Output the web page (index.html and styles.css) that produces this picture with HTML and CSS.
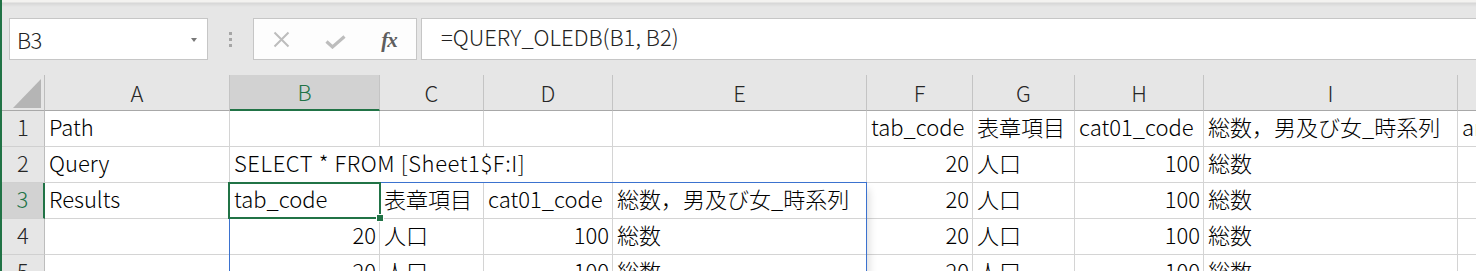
FILE: index.html
```html
<!DOCTYPE html>
<html lang="ja">
<head>
<meta charset="utf-8">
<title>Excel - QUERY_OLEDB</title>
<link rel="stylesheet" href="styles.css">
</head>
<body>
<div class="app">
  <div class="topband"></div>
  <div class="fbar">
    <div class="namebox"><span class="name">B3</span><span class="dd"></span></div>
    <div class="grip"><i></i><i></i><i></i></div>
    <div class="fbtns">
      <span class="slot">
        <svg class="ico-x" width="17" height="17" viewBox="0 0 17 17"><path d="M1.5 1.5 L15.5 15.5 M15.5 1.5 L1.5 15.5" stroke="#bdbdbd" stroke-width="2" fill="none"/></svg>
      </span>
      <span class="slot">
        <svg class="ico-ok" width="21" height="14" viewBox="0 0 21 14"><path d="M1.5 6.5 L7.5 12 L19.5 1.5" stroke="#bdbdbd" stroke-width="3.2" fill="none"/></svg>
      </span>
      <span class="slot"><span class="fx">fx</span></span>
    </div>
    <div class="formula">=QUERY_OLEDB(B1, B2)</div>
  </div>

  <div class="sheetwrap">
    <div class="sheet">
      <div class="corner"><svg width="42" height="35" viewBox="0 0 42 35"><path d="M39 4 L39 33 L11 33 Z" fill="#b5b5b5"/></svg></div>
      <div class="ch">A</div>
      <div class="ch sel">B</div>
      <div class="ch">C</div>
      <div class="ch">D</div>
      <div class="ch">E</div>
      <div class="ch">F</div>
      <div class="ch">G</div>
      <div class="ch">H</div>
      <div class="ch">I</div>
      <div class="ch">J</div>

      <div class="rh">1</div>
      <div class="c">Path</div>
      <div class="c"></div>
      <div class="c"></div>
      <div class="c"></div>
      <div class="c"></div>
      <div class="c">tab_code</div>
      <div class="c">表章項目</div>
      <div class="c">cat01_code</div>
      <div class="c">総数，男及び女_時系列</div>
      <div class="c">area_code</div>

      <div class="rh">2</div>
      <div class="c">Query</div>
      <div class="c span3">SELECT * FROM [Sheet1$F:I]</div>
      <div class="c"></div>
      <div class="c n">20</div>
      <div class="c">人口</div>
      <div class="c n">100</div>
      <div class="c">総数</div>
      <div class="c"></div>

      <div class="rh sel">3</div>
      <div class="c">Results</div>
      <div class="c">tab_code</div>
      <div class="c">表章項目</div>
      <div class="c">cat01_code</div>
      <div class="c">総数，男及び女_時系列</div>
      <div class="c n">20</div>
      <div class="c">人口</div>
      <div class="c n">100</div>
      <div class="c">総数</div>
      <div class="c"></div>

      <div class="rh">4</div>
      <div class="c"></div>
      <div class="c n">20</div>
      <div class="c">人口</div>
      <div class="c n">100</div>
      <div class="c">総数</div>
      <div class="c n">20</div>
      <div class="c">人口</div>
      <div class="c n">100</div>
      <div class="c">総数</div>
      <div class="c"></div>

      <div class="rh">5</div>
      <div class="c"></div>
      <div class="c n">20</div>
      <div class="c">人口</div>
      <div class="c n">100</div>
      <div class="c">総数</div>
      <div class="c n">20</div>
      <div class="c">人口</div>
      <div class="c n">100</div>
      <div class="c">総数</div>
      <div class="c"></div>
    </div>

    <div class="overlay">
      <div class="spill"></div>
      <div class="active"><span class="handle"></span></div>
    </div>
  </div>
</div>
</body>
</html>
```
FILE: styles.css
```css
html, body {
  margin: 0;
  padding: 0;
}
body {
  width: 1476px;
  height: 271px;
  overflow: hidden;
  background: #e6e6e6;
  font-family: "Noto Sans CJK JP", "Noto Sans", sans-serif;
  font-weight: 300;
  color: #000;
}
.app {
  border-left: 2px solid #217346;
  height: 271px;
  box-sizing: border-box;
  overflow: hidden;
}
.topband {
  height: 7px;
  background: linear-gradient(#f3f2f0 0, #f3f2f0 2px, #d6d6d6 3px, #e6e6e6 7px);
}

/* formula bar */
.fbar {
  display: flex;
  height: 42px;
  margin-top: 11px;
  margin-right: -20px;
}
.namebox {
  margin-left: 7px;
  width: 199px;
  box-sizing: border-box;
  border: 1px solid #c6c6c6;
  background: #fff;
  display: flex;
  align-items: center;
  justify-content: space-between;
  padding: 0 10px 0 7px;
}
.name {
  font-size: 22px;
  color: #222;
  padding-bottom: 1px;
  letter-spacing: -0.5px;
}
.dd {
  width: 0;
  height: 0;
  border-left: 3.5px solid transparent;
  border-right: 3.5px solid transparent;
  border-top: 4px solid #787878;
  margin-top: 1px;
}
.grip {
  width: 45px;
  display: flex;
  flex-direction: column;
  align-items: center;
  justify-content: center;
  gap: 3px;
}
.grip i {
  display: block;
  width: 3px;
  height: 3px;
  background: #a6a6a6;
}
.fbtns {
  width: 164px;
  box-sizing: border-box;
  border: 1px solid #c6c6c6;
  background: #fdfdfd;
  display: flex;
}
.slot {
  width: 54px;
  display: flex;
  align-items: center;
  justify-content: center;
}
.ico-ok {
  margin-top: 6px;
}
.fx {
  font-family: "Liberation Serif", "DejaVu Serif", serif;
  font-style: italic;
  font-weight: bold;
  font-size: 21px;
  color: #5e5e5e;
  letter-spacing: -1px;
  margin-top: 2px;
}
.formula {
  flex: 1;
  margin-left: 4px;
  box-sizing: border-box;
  border: 1px solid #c6c6c6;
  background: #fff;
  display: flex;
  align-items: center;
  padding: 0 0 7px 19px;
  font-size: 22px;
  color: #222;
}

/* sheet grid */
.sheetwrap {
  margin-top: 15px;
  display: grid;
}
.sheet,
.overlay {
  grid-area: 1 / 1;
  display: grid;
  grid-template-columns: 43px 185px 150px 104px 129px 254px 106px 102px 129px 254px 220px;
  grid-auto-rows: 36px;
}
.sheet {
  background: #fff;
}
.overlay {
  pointer-events: none;
}
.corner {
  background: #e6e6e6;
  border-right: 1px solid #bdbdbd;
  border-bottom: 1px solid #a8a8a8;
}
.corner svg {
  display: block;
}
.ch {
  background: #e6e6e6;
  border-right: 1px solid #c4c4c4;
  border-bottom: 1px solid #a8a8a8;
  display: flex;
  align-items: center;
  justify-content: center;
  font-size: 22px;
  color: #262626;
  padding-bottom: 2px;
}
.ch.sel {
  background: #d2d2d2;
  color: #217346;
  border-bottom: 2px solid #217346;
}
.rh {
  background: #e6e6e6;
  border-right: 1px solid #bdbdbd;
  border-bottom: 1px solid #d0d0d0;
  display: flex;
  align-items: center;
  justify-content: center;
  font-size: 22px;
  color: #262626;
  padding-bottom: 6px;
}
.rh.sel {
  background: #d2d2d2;
  color: #217346;
  border-right: 2px solid #217346;
}
.c {
  border-right: 1px solid #d4d4d4;
  border-bottom: 1px solid #d4d4d4;
  display: flex;
  align-items: center;
  padding: 0 4px 6px 4px;
  font-size: 22px;
  white-space: nowrap;
  overflow: hidden;
  box-sizing: border-box;
  min-width: 0;
}
.c.n {
  justify-content: flex-end;
  padding-right: 3px;
}
.c.span3 {
  grid-column: span 3;
  overflow: visible;
  letter-spacing: 0.6px;
}

/* selection overlays */
.spill {
  grid-column: 3 / 7;
  grid-row: 4 / 7;
  margin: -1px 0 0 -1px;
  border: 1px solid #3b72cf;
  border-bottom: none;
  box-shadow: 9px 0 8px -7px rgba(0, 0, 0, 0.14);
}
.active {
  grid-column: 3 / 4;
  grid-row: 4 / 5;
  margin: -1px -1px 0 -2px;
  border: 2px solid #217346;
  position: relative;
}
.handle {
  position: absolute;
  right: -5px;
  bottom: -5px;
  width: 6px;
  height: 6px;
  background: #217346;
  border: 1px solid #fff;
}
```
